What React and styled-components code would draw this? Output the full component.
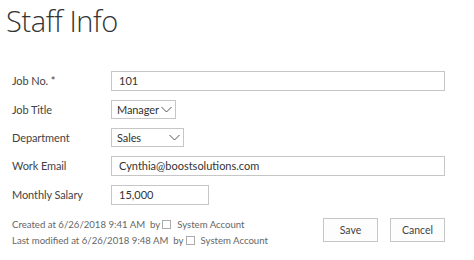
import React from "react"
import styled, { createGlobalStyle } from "styled-components"

const GlobalStyle = createGlobalStyle`
  body {
    margin: 0;
    background: #fff;
    font-family: Lato, "Open Sans", sans-serif;
  }
`

const Page = styled.div`
  width: 474px;
  height: 260px;
  box-sizing: border-box;
  padding: 2px 0 0 0;
  overflow: hidden;
`

const Title = styled.h1`
  margin: 0 0 0 6px;
  font-family: "Open Sans", sans-serif;
  font-size: 29px;
  font-weight: 300;
  color: #333;
  line-height: 38px;
  letter-spacing: -0.4px;
`

const Form = styled.div`
  display: grid;
  grid-template-columns: 99px 334px;
  row-gap: 9px;
  padding: 31px 0 0 12px;
  align-items: center;
`

const Label = styled.div`
  font-size: 11px;
  letter-spacing: -0.1px;
  color: #444;
  line-height: 18px;
`

const TextBox = styled.div`
  box-sizing: border-box;
  width: ${(p) => p.$w || "334px"};
  height: 20px;
  border: 1px solid #c6c6c6;
  padding: 0 7px;
  font-size: 11px;
  line-height: 18px;
  color: #333;
`

const Select = styled.div`
  box-sizing: border-box;
  width: ${(p) => p.$w};
  height: 19px;
  border: 1px solid #c6c6c6;
  padding: 0 3px 0 5px;
  display: flex;
  align-items: center;
  justify-content: space-between;
  font-size: 11px;
  letter-spacing: -0.1px;
  color: #333;
`

const Footer = styled.div`
  display: flex;
  justify-content: space-between;
  align-items: flex-start;
  padding: 11px 29px 0 12px;
`

const Meta = styled.div`
  font-size: 9.6px;
  color: #666;
  line-height: 16px;
  padding-top: 1px;
`

const Box = styled.span`
  display: inline-block;
  width: 7px;
  height: 7px;
  border: 1px solid #aaa;
  margin: 0 6px 0 2px;
  vertical-align: -1px;
`

const Buttons = styled.div`
  display: flex;
  gap: 12px;
  margin-top: 2px;
`

const Button = styled.div`
  box-sizing: border-box;
  width: 55px;
  height: 24px;
  border: 1px solid #c6c6c6;
  background: #fdfdfd;
  display: flex;
  align-items: center;
  justify-content: center;
  font-size: 10.5px;
  color: #444;
`

const Chevron = () => (
  <svg width="11" height="7" viewBox="0 0 11 7">
    <path d="M0.5 1 L5.5 6 L10.5 1" fill="none" stroke="#555" strokeWidth="1" />
  </svg>
)

export default function App() {
  return (
    <>
      <GlobalStyle />
      <Page>
        <Title>Staff Info</Title>
        <Form>
          <Label>Job No. *</Label>
          <TextBox>101</TextBox>
          <Label>Job Title</Label>
          <Select $w="65px">
            Manager <Chevron />
          </Select>
          <Label>Department</Label>
          <Select $w="73px">
            Sales <Chevron />
          </Select>
          <Label>Work Email</Label>
          <TextBox>Cynthia@boostsolutions.com</TextBox>
          <Label>Monthly Salary</Label>
          <TextBox $w="98px">15,000</TextBox>
        </Form>
        <Footer>
          <Meta>
            <div>
              Created at 6/26/2018 9:41 AM&nbsp; by<Box />System Account
            </div>
            <div>
              Last modified at 6/26/2018 9:48 AM&nbsp; by<Box />System Account
            </div>
          </Meta>
          <Buttons>
            <Button>Save</Button>
            <Button>Cancel</Button>
          </Buttons>
        </Footer>
      </Page>
    </>
  )
}
